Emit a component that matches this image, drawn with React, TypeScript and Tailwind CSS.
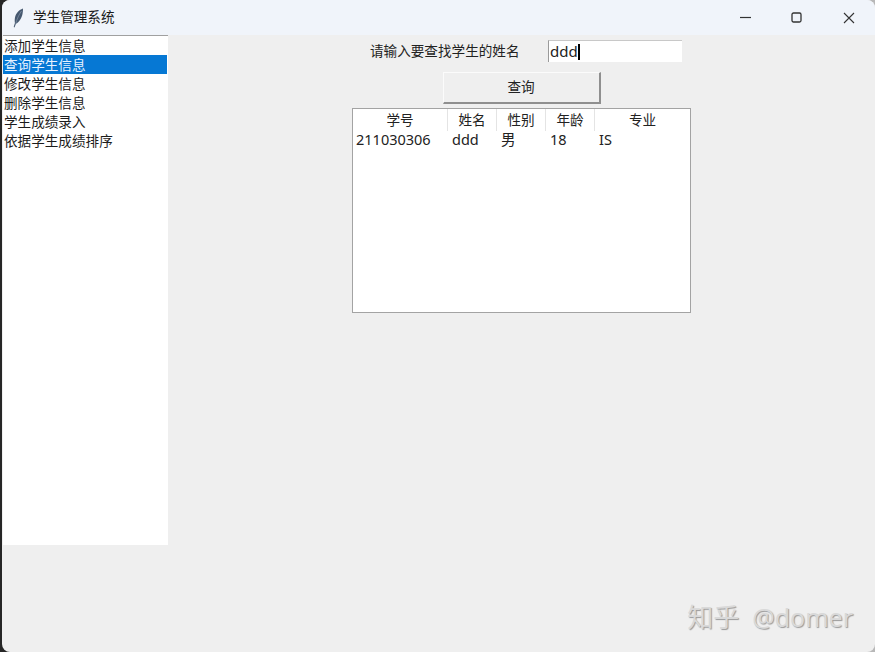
const font = "font-['Noto_Sans','Noto_Sans_CJK_SC',sans-serif]";

const menu = ["添加学生信息", "查询学生信息", "修改学生信息", "删除学生信息", "学生成绩录入", "依据学生成绩排序"];
const columns = ["学号", "姓名", "性别", "年龄", "专业"];
const row = ["211030306", "ddd", "男", "18", "IS"];

const TitleBar = () => (
  <div className="flex h-[35px] items-center rounded-t-lg bg-[#f0f4fa] text-[#1a1a1a]">
    <svg width="13" height="20" viewBox="0 0 12 20" className="ml-[10px]">
      <path d="M10.5 0.5C6 2 3.2 5.5 2.4 10c-.3 2-.2 3.5 0 5l-1.2 4 .8.4 1.4-3.6C6.5 14.5 9 10.5 10 6c.3-2 .6-3.8.5-5.5z" fill="#46586f" />
      <path d="M9 3C6.5 6.5 4.5 11 3.2 15.6" stroke="#9fb0c4" strokeWidth="0.5" fill="none" />
    </svg>
    <span className="mb-[2px] ml-[8px] text-[13.6px] leading-none">学生管理系统</span>
    <div className="ml-auto flex items-center">
      <svg width="11" height="11" viewBox="0 0 11 11" className="mr-[40px]">
        <path d="M0 5.5h11" stroke="#333" strokeWidth="1.2" />
      </svg>
      <svg width="11" height="11" viewBox="0 0 11 11" className="mr-[41px]">
        <rect x="1" y="1" width="9" height="9" rx="1.5" fill="none" stroke="#333" strokeWidth="1.3" />
      </svg>
      <svg width="12" height="12" viewBox="0 0 12 12" className="mr-[20px]">
        <path d="M1 1l10 10M11 1L1 11" stroke="#333" strokeWidth="1.1" />
      </svg>
    </div>
  </div>
);

const Sidebar = () => (
  <ul className="ml-px h-[510px] w-[165px] shrink-0 border-t border-t-[#a0a0a0] bg-white text-[13.6px] leading-[19px] text-[#1c1c1c]">
    {menu.map((item, i) => (
      <li key={item} className={i === 1 ? "mr-px h-[19px] bg-[#0678d4] pl-px text-[#e6f2ff]" : "h-[19px] pl-px"}>
        {item}
      </li>
    ))}
  </ul>
);

const ResultTable = () => (
  <div className="mt-[4px] h-[205px] w-[339px] border border-[#a3a3a3] bg-white text-[#222]">
    <div className="grid h-[22px] grid-cols-[95px_49px_49px_49px_1fr] text-center text-[13.6px] leading-[22px]">
      {columns.map((c, i) => (
        <div key={c} className={i < 4 ? "border-r border-r-[#e4e4e4]" : ""}>
          {c}
        </div>
      ))}
    </div>
    <div className="-mt-[2px] grid h-[20px] grid-cols-[96px_49px_49px_49px_1fr] text-[14.5px] leading-[20px]">
      {row.map((v) => (
        <div key={v} className="pl-[3px]">
          {v}
        </div>
      ))}
    </div>
  </div>
);

export default function App() {
  return (
    <div className={`${font} relative h-[652px] w-[875px] overflow-hidden bg-[linear-gradient(90deg,#262626_0,#262626_50%,#b8b8b8_50%)] pl-[2px]`}>
      <div className="flex h-[652px] flex-col rounded-lg bg-[#efefef]">
        <TitleBar />
        <div className="flex flex-1">
          <Sidebar />
          <div className="flex flex-1 flex-col items-center">
            <div className="flex h-[32px] w-[321px] items-start text-[13.6px] text-[#222]">
              <span className="mt-[6px] w-[187px] pl-[9px]">请输入要查找学生的姓名</span>
              <div className="mt-[5px] flex h-[22px] w-[134px] items-center border-l border-t border-l-[#9a9a9a] border-t-[#c8c8c8] bg-white pl-px text-[15px] text-[#222]">
                ddd
                <span className="h-[16px] w-[2px] bg-black" />
              </div>
            </div>
            <button className="mt-[5px] h-[32px] w-[158px] border-b-2 border-l border-r-2 border-t border-b-[#8f8f8f] border-l-[#fbfbfb] border-r-[#8f8f8f] border-t-[#fbfbfb] bg-[#efefef] text-[13.6px] text-[#222]">
              查询
            </button>
            <ResultTable />
          </div>
        </div>
      </div>
      <div className="absolute right-[22px] top-[601px] flex items-center gap-[13px] text-[25px] leading-[32px] text-[#d9d9d9] [text-shadow:1px_1px_1px_#9a9a9a]">
        <span className="text-[26px]">知乎</span>
        <span>@domer</span>
      </div>
    </div>
  );
}
